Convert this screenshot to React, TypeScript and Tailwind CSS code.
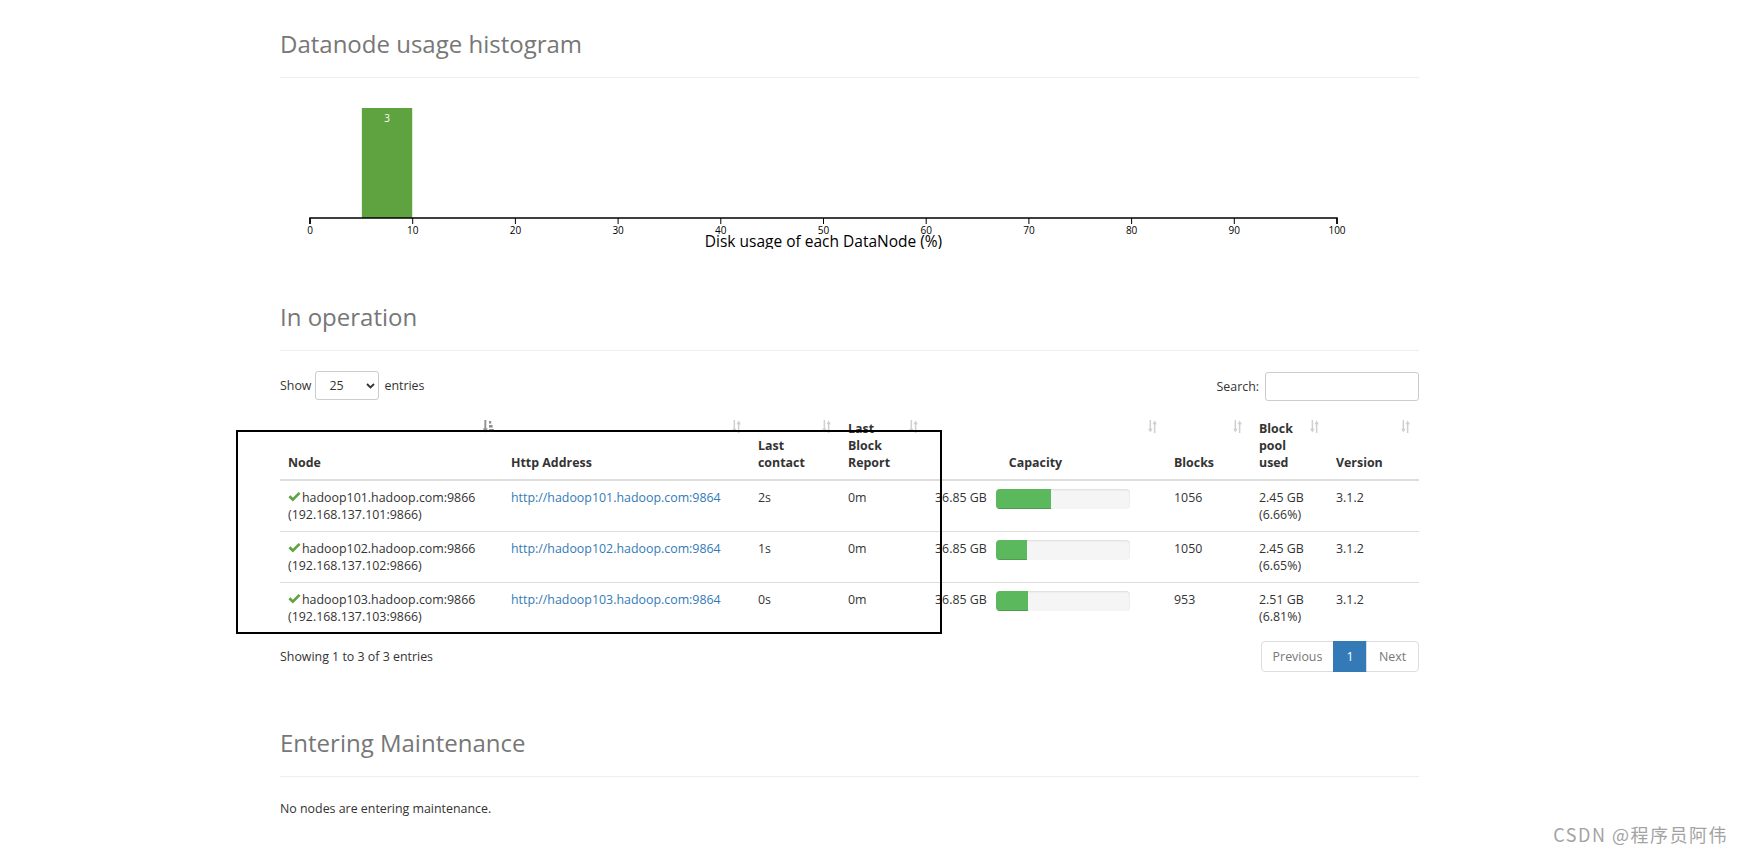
import React from "react";

// Histogram geometry: 0% sits 30px into the container, 100% at 1057px
const sx = (v: number) => 30 + v * 10.27;
const ticks = [0, 10, 20, 30, 40, 50, 60, 70, 80, 90, 100];

const columns = [
  { w: 223, lines: ["Node"], icon: "asc" },
  { w: 247, lines: ["Http Address"], icon: "both" },
  { w: 90, lines: ["Last", "contact"], icon: "both" },
  { w: 87, lines: ["Last", "Block", "Report"], icon: "both" },
  { w: 239, lines: ["Capacity"], icon: "both", center: true },
  { w: 85, lines: ["Blocks"], icon: "both" },
  { w: 77, lines: ["Block", "pool", "used"], icon: "both" },
  { w: 91, lines: ["Version"], icon: "both" },
];

const nodes = [
  { id: "101", contact: "2s", used: 41, blocks: "1056", pool: "2.45 GB", pct: "(6.66%)" },
  { id: "102", contact: "1s", used: 23, blocks: "1050", pool: "2.45 GB", pct: "(6.65%)" },
  { id: "103", contact: "0s", used: 24, blocks: "953", pool: "2.51 GB", pct: "(6.81%)" },
];

const PageHeader = ({ children, className }: { children: React.ReactNode; className: string }) => (
  <h1 className={`border-b border-[#eee] pb-[20px] text-[24px] font-normal leading-[26px] text-[#777] ${className}`}>
    {children}
  </h1>
);

const SortBoth = () => (
  <svg width="9" height="13" viewBox="0 0 9 13" className="fill-[#cfcfcf]">
    <path d="M1.6 0h1.5v8.8h1.5L2.35 12.5 0.1 8.8h1.5z" />
    <path d="M5.9 13h1.5V4.2h1.5L6.65 0.5 4.4 4.2h1.5z" />
  </svg>
);

const SortAsc = () => (
  <svg width="11" height="13" viewBox="0 0 11 13" className="fill-[#8f8f8f]">
    <path d="M1.4 0h1.9v8.6h1.6L2.35 12.6 -0.2 8.6h1.6z" />
    <rect x="6" y="1" width="2.2" height="2.6" />
    <rect x="6" y="5" width="3.6" height="2.6" />
    <rect x="6" y="9" width="5" height="2.6" />
  </svg>
);

const CheckIcon = () => (
  <svg width="13" height="12" viewBox="0 0 14 12" className="mr-px inline-block fill-[#5fa341] align-[-1px]">
    <path d="M0.5 6.2 L2.6 4.1 L5.2 6.7 L11.4 0.5 L13.5 2.6 L5.2 10.9 Z" />
  </svg>
);

const Histogram = () => (
  <svg width={1139} height={171} className="block overflow-hidden font-['Open_Sans',sans-serif]">
    <rect x={sx(5) + 0.5} y={30} width={sx(10) - sx(5) - 1} height={110} fill="#5fa341" />
    <text x={(sx(5) + sx(10)) / 2} y={44} fill="#fff" fontSize={10} textAnchor="middle">
      3
    </text>
    <path d={`M${sx(0)},146V140H${sx(100)}V146`} stroke="#000" strokeWidth={1.6} fill="none" />
    {ticks.map((t) => (
      <g key={t}>
        <line x1={sx(t)} x2={sx(t)} y1={140} y2={146} stroke="#000" strokeWidth={1} />
        <text x={sx(t)} y={156} fontSize={10} textAnchor="middle" fill="#000">
          {t}
        </text>
      </g>
    ))}
    <text x={sx(50)} y={169} fontSize={15.5} textAnchor="middle" fill="#000">
      Disk usage of each DataNode (%)
    </text>
  </svg>
);

export default function App() {
  return (
    <div className="relative min-h-[856px] w-full overflow-hidden bg-white font-['Open_Sans',sans-serif] text-[12.4px] leading-[17px] text-[#333]">
      <div className="ml-[280px] w-[1139px]">
        <PageHeader className="mt-[31px]">Datanode usage histogram</PageHeader>
        <Histogram />

        <PageHeader className="mt-[55px]">In operation</PageHeader>

        {/* Length selector + search */}
        <div className="mt-[20px] flex h-[30px] items-start justify-between">
          <label className="flex h-[29px] items-center">
            <span>Show</span>
            <span className="relative ml-[4px] inline-block">
              <select
                defaultValue="25"
                className="h-[29px] w-[64px] appearance-none rounded-[3px] border border-[#ccc] bg-white pl-[13px] text-[12.4px] text-[#333] outline-none"
              >
                <option value="10">10</option>
                <option value="25">25</option>
                <option value="50">50</option>
                <option value="100">100</option>
              </select>
              <svg
                width="9"
                height="6"
                viewBox="0 0 9 6"
                className="pointer-events-none absolute left-[51px] top-[12px] stroke-[#333]"
                fill="none"
                strokeWidth="1.8"
              >
                <path d="M1 1l3.5 3.5L8 1" />
              </svg>
            </span>
            <span className="ml-[5px]">entries</span>
          </label>
          <label className="mt-px flex h-[29px] items-center">
            <span>Search:</span>
            <input className="ml-[6px] h-[29px] w-[154px] rounded-[3px] border border-[#ccc] outline-none" />
          </label>
        </div>

        <table className="mt-[11px] w-[1139px] table-fixed border-collapse">
          <colgroup>
            {columns.map((c, i) => (
              <col key={i} style={{ width: c.w }} />
            ))}
          </colgroup>
          <thead>
            <tr>
              {columns.map((c, i) => (
                <th
                  key={i}
                  className={`relative border-b-2 border-[#ddd] pb-[8px] pl-[8px] pr-[30px] pt-[8px] align-bottom font-bold ${
                    c.center ? "text-center" : "text-left"
                  }`}
                >
                  {c.lines.map((l) => (
                    <div key={l}>{l}</div>
                  ))}
                  <span className="absolute right-[9px] top-[8px]">
                    {c.icon === "asc" ? <SortAsc /> : <SortBoth />}
                  </span>
                </th>
              ))}
            </tr>
          </thead>
          <tbody>
            {nodes.map((n, i) => (
              <tr key={n.id} className={i > 0 ? "border-t border-[#ddd]" : ""}>
                <td className="p-[8px] align-top">
                  <div className="whitespace-nowrap">
                    <CheckIcon />
                    hadoop{n.id}.hadoop.com:9866
                  </div>
                  <div>(192.168.137.{n.id}:9866)</div>
                </td>
                <td className="p-[8px] align-top">
                  <a href="#" className="whitespace-nowrap text-[#337ab7]">
                    http://hadoop{n.id}.hadoop.com:9864
                  </a>
                </td>
                <td className="p-[8px] align-top">{n.contact}</td>
                <td className="p-[8px] align-top">0m</td>
                <td className="p-[8px] align-top">
                  <div className="flex">
                    <div className="w-[61px] whitespace-nowrap">36.85 GB</div>
                    <div className="h-[20px] w-[134px] overflow-hidden rounded-[4px] bg-[#f5f5f5] shadow-[inset_0_1px_2px_rgba(0,0,0,0.1)]">
                      <div
                        className="h-full bg-[#5cb85c] shadow-[inset_0_-1px_0_rgba(0,0,0,0.15)]"
                        style={{ width: `${n.used}%` }}
                      />
                    </div>
                  </div>
                </td>
                <td className="p-[8px] align-top">{n.blocks}</td>
                <td className="p-[8px] align-top">
                  <div>{n.pool}</div>
                  <div>{n.pct}</div>
                </td>
                <td className="p-[8px] align-top">3.1.2</td>
              </tr>
            ))}
          </tbody>
        </table>

        {/* Info + pagination */}
        <div className="mt-[8px] flex items-center justify-between">
          <div>Showing 1 to 3 of 3 entries</div>
          <div className="flex h-[31px]">
            <span className="flex w-[73px] items-center justify-center rounded-l-[4px] border border-[#ddd] text-[#777]">
              Previous
            </span>
            <span className="-ml-px flex w-[34px] items-center justify-center border border-[#337ab7] bg-[#337ab7] text-white">
              1
            </span>
            <span className="-ml-px flex w-[53px] items-center justify-center rounded-r-[4px] border border-[#ddd] text-[#777]">
              Next
            </span>
          </div>
        </div>

        <PageHeader className="mt-[58px]">Entering Maintenance</PageHeader>
        <p className="mt-[23px]">No nodes are entering maintenance.</p>
      </div>

      {/* annotation box drawn over the screenshot */}
      <div className="pointer-events-none absolute left-[236px] top-[430px] h-[204px] w-[706px] border-2 border-black" />

      {/* watermark */}
      <div className="absolute right-[15px] top-[822px] font-['Noto_Sans_CJK_SC',sans-serif] text-[18px] leading-[24px] tracking-[1.5px] text-[#a3a3a3]">
        CSDN @程序员阿伟
      </div>
    </div>
  );
}
